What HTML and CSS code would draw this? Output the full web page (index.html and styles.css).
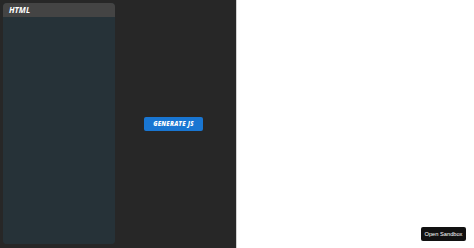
FILE: index.html
```html
<!DOCTYPE html>
<html>
<head>
<meta charset="utf-8">
<link rel="stylesheet" href="styles.css">
</head>
<body>
<div class="app">
  <div class="left">
    <div class="card">
      <div class="card-head">HTML</div>
      <div class="card-body"></div>
    </div>
    <div class="center">
      <button class="gen">GENERATE JS</button>
    </div>
  </div>
  <div class="right"></div>
</div>
<a class="sandbox">Open Sandbox</a>
</body>
</html>
```
FILE: styles.css
```css
html, body {
  margin: 0;
  padding: 0;
  height: 100%;
  font-family: "Open Sans", "Liberation Sans", sans-serif;
}
.app {
  display: flex;
  height: 248px;
}
.left {
  width: 237px;
  background: #272727;
  border-right: 1px solid #d0d0d0;
  display: flex;
  padding: 3px 0 4px 3px;
  box-sizing: border-box;
}
.card {
  width: 112px;
  display: flex;
  flex-direction: column;
  border-radius: 4px;
  overflow: hidden;
  background: #263238;
}
.card-head {
  height: 14px;
  background: #444444;
  color: #fff;
  font-weight: 700;
  font-style: italic;
  font-size: 8px;
  line-height: 14px;
  padding-left: 6px;
}
.card-body {
  flex: 1;
  background: #263238;
}
.center {
  flex: 1;
  display: flex;
  align-items: center;
  justify-content: center;
  padding-right: 4px;
}
.gen {
  width: 59px;
  height: 14px;
  border: 0;
  border-radius: 2px;
  background: #1976d2;
  color: #fff;
  font-family: "Open Sans", sans-serif;
  font-weight: 800;
  font-style: italic;
  font-size: 6px;
  letter-spacing: 0.3px;
  padding: 0;
  margin-top: 1px;
}
.right {
  flex: 1;
  background: #fff;
}
.sandbox {
  position: absolute;
  right: 8px;
  bottom: 7px;
  width: 45px;
  height: 14px;
  background: #111;
  color: #fff;
  border-radius: 2px;
  font-size: 5.7px;
  line-height: 14px;
  text-align: center;
  font-family: "Liberation Sans", sans-serif;
}
```
